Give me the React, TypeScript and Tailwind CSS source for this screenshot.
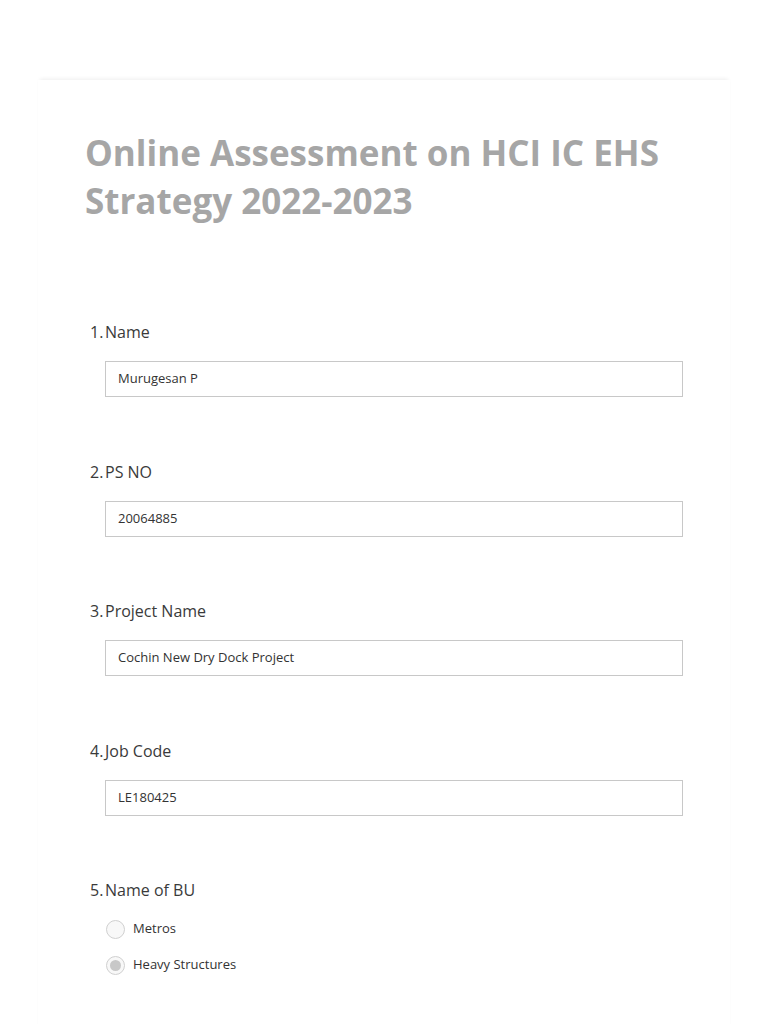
const FONT = { fontFamily: '"Segoe UI", "Open Sans", "Noto Sans", sans-serif' }

const TEXT_QUESTIONS = [
  { n: 1, label: 'Name', value: 'Murugesan P' },
  { n: 2, label: 'PS NO', value: '20064885' },
  { n: 3, label: 'Project Name', value: 'Cochin New Dry Dock Project' },
  { n: 4, label: 'Job Code', value: 'LE180425' },
]

const BU_OPTIONS = [
  { label: 'Metros', checked: false },
  { label: 'Heavy Structures', checked: true },
]

function QuestionTitle({ n, label }: { n: number; label: string }) {
  return (
    <div className="flex items-baseline text-[16px] leading-[22px] text-[#3a3a3a]">
      <span className="w-[15px] shrink-0">{n}.</span>
      <span>{label}</span>
    </div>
  )
}

export default function App() {
  return (
    <div className="min-h-[1024px] bg-white overflow-hidden" style={FONT}>
      <div className="h-[80px]" />
      {/* card: only its top edge shadow shows on screen */}
      <div className="mx-[38px] min-h-[960px] bg-white shadow-[0_-3px_4px_-2px_rgba(0,0,0,0.07)]">
        <div className="pl-[47px] pr-[30px] pt-[49px]">
          <h1 className="text-[35px] font-bold leading-[48px] text-[#a6a6a6]">
            Online Assessment on HCI IC EHS
            <br />
            Strategy 2022-2023
          </h1>
        </div>

        <div className="pl-[52px] pt-[96px]">
          {TEXT_QUESTIONS.map(q => (
            <div key={q.n} className="h-[139.5px]">
              <QuestionTitle n={q.n} label={q.label} />
              <div className="ml-[15px] mt-[18px] w-[578px] h-[36px] border border-[#c8c8c8] flex items-center px-[12px] text-[13px] text-[#333333]">
                {q.value}
              </div>
            </div>
          ))}

          <div>
            <QuestionTitle n={5} label="Name of BU" />
            <div className="ml-[15px] mt-[18px] flex flex-col gap-[16px]">
              {BU_OPTIONS.map(o => (
                <div key={o.label} className="flex items-center h-[20px] text-[13px] text-[#333333]">
                  <span className="ml-[1px] w-[19px] h-[19px] rounded-full border border-[#d0d0d0] bg-[#f8f8f8] flex items-center justify-center">
                    {o.checked && <span className="w-[11px] h-[11px] rounded-full bg-[#c8c8c8]" />}
                  </span>
                  <span className="ml-[8px]">{o.label}</span>
                </div>
              ))}
            </div>
          </div>
        </div>
      </div>
    </div>
  )
}
